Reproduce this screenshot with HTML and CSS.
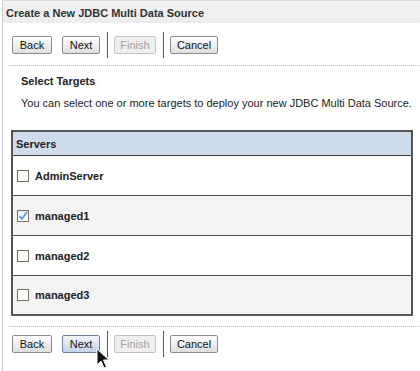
FILE: index.html
```html
<!DOCTYPE html>
<html>

<head>
	<meta charset="UTF-8">
	<title>Create a New JDBC Multi Data Source</title>
	<link rel="stylesheet" href="styles.css">
</head>

<body>
	<div class="page">
		<div class="titlebar"><span>Create a New JDBC Multi Data Source</span></div>
		<div class="panel">
			<div class="toolbar">
				<button class="btn back">Back</button>
				<button class="btn next">Next</button>
				<span class="sep"></span>
				<button class="btn finish" disabled>Finish</button>
				<span class="sep"></span>
				<button class="btn cancel">Cancel</button>
			</div>
			<div class="rule"></div>
			<div class="section">
				<h2><span>Select Targets</span></h2>
				<p><span>You can select one or more targets to deploy your new JDBC Multi Data Source.</span></p>
			</div>
			<table class="grid">
				<tr class="head">
					<th>Servers</th>
				</tr>
				<tr>
					<td><label><span class="box"></span>AdminServer</label></td>
				</tr>
				<tr class="alt">
					<td><label><span class="box checked">
								<svg width="10" height="10" viewBox="0 0 10 10">
									<path d="M1.5 5 L4 8 L9 1" fill="none" stroke="#4a90d9" stroke-width="1.6" />
								</svg></span>managed1</label></td>
				</tr>
				<tr>
					<td><label><span class="box"></span>managed2</label></td>
				</tr>
				<tr class="alt">
					<td><label><span class="box"></span>managed3</label></td>
				</tr>
			</table>
			<div class="rule"></div>
			<div class="toolbar bottom">
				<button class="btn back">Back</button>
				<button class="btn next hover">Next
					<svg class="cursor" width="14" height="22" viewBox="0 0 14 22">
						<path d="M1 1 L1 17 L5 13 L8 20 L10.5 19 L7.5 12 L13 12 Z" fill="#111" stroke="#fff" stroke-width="1" />
					</svg>
				</button>
				<span class="sep"></span>
				<button class="btn finish" disabled>Finish</button>
				<span class="sep"></span>
				<button class="btn cancel">Cancel</button>
			</div>
		</div>
	</div>
</body>

</html>
```
FILE: styles.css
```css
html,
body {
	margin: 0;
	padding: 0;
	background: #fff;
}

body {
	font-family: "Liberation Sans", Arial, sans-serif;
	font-size: 11px;
	color: #222;
}

.page {
	margin-left: 2px;
	border-left: 1px solid #c9cdd3;
	min-height: 371px;
	box-sizing: border-box;
}

.titlebar {
	height: 22px;
	border-top: 1px solid #d3d9e2;
	background: linear-gradient(#f4f4f4, #ececec);
	padding-left: 3px;
	font: bold 11px/25px "Liberation Sans", sans-serif;
	color: #333;
}

.panel {
	padding: 0 0 0 8px;
}

.toolbar {
	display: flex;
	align-items: center;
	height: 42px;
	padding-top: 2px;
	box-sizing: border-box;
}

.toolbar.bottom {
	height: 34px;
	padding-top: 0;
}

.btn {
	position: relative;
	height: 18px;
	padding: 0;
	font: 11px "Liberation Sans", sans-serif;
	color: #111;
	border: 1px solid #8c8c8c;
	border-radius: 2px;
	background: linear-gradient(#ffffff, #dedede);
}

.back {
	width: 40px;
	margin-left: 1px;
}

.next {
	width: 38px;
	margin-left: 10px;
}

.finish {
	width: 42px;
}

.cancel {
	width: 48px;
}

.btn:disabled {
	color: #a0a0a0;
	border-color: #c4c4c4;
	background: #efefef;
}

.btn.hover {
	background: linear-gradient(#f4f7fc, #c3d3ec);
	border-color: #6f7f99;
}

.cursor {
	position: absolute;
	left: 33px;
	top: 12px;
}

.sep {
	width: 1px;
	height: 26px;
	background: #555;
	margin: 0 6px 0 7px;
}

.rule {
	border-top: 1px dotted #bbb;
	margin-left: -1px;
}

.section {
	padding: 7px 0 0 10px;
}

h2 {
	margin: 0;
	font: bold 11px/16px "Liberation Sans", sans-serif;
	color: #222;
}

p {
	margin: 6px 0 0;
	font: 11px/16px "Liberation Sans", sans-serif;
}

.grid {
	width: 402px;
	margin: 19px 0 10px;
	border-collapse: collapse;
	border: 2px solid #555;
}

.grid th {
	height: 23px;
	text-align: left;
	padding: 0 3px;
	background: #cfdcec;
	font: bold 11px "Liberation Sans", sans-serif;
	border-bottom: 1px solid #444;
}

.grid td {
	height: 39px;
	padding: 0 4px;
	border-bottom: 1px solid #555;
	font: bold 11px "Liberation Sans", sans-serif;
}

.grid tr:last-child td {
	border-bottom: 0;
	height: 38px;
}

.grid .alt td {
	background: #f4f4f4;
}

label {
	display: flex;
	align-items: center;
}

.box {
	width: 10px;
	height: 10px;
	border: 1px solid #7a7161;
	background: #fff;
	margin-right: 6px;
	display: inline-flex;
	align-items: center;
	justify-content: center;
}

.box.checked {
	background: linear-gradient(#eef4fb, #ffffff);
}
```
